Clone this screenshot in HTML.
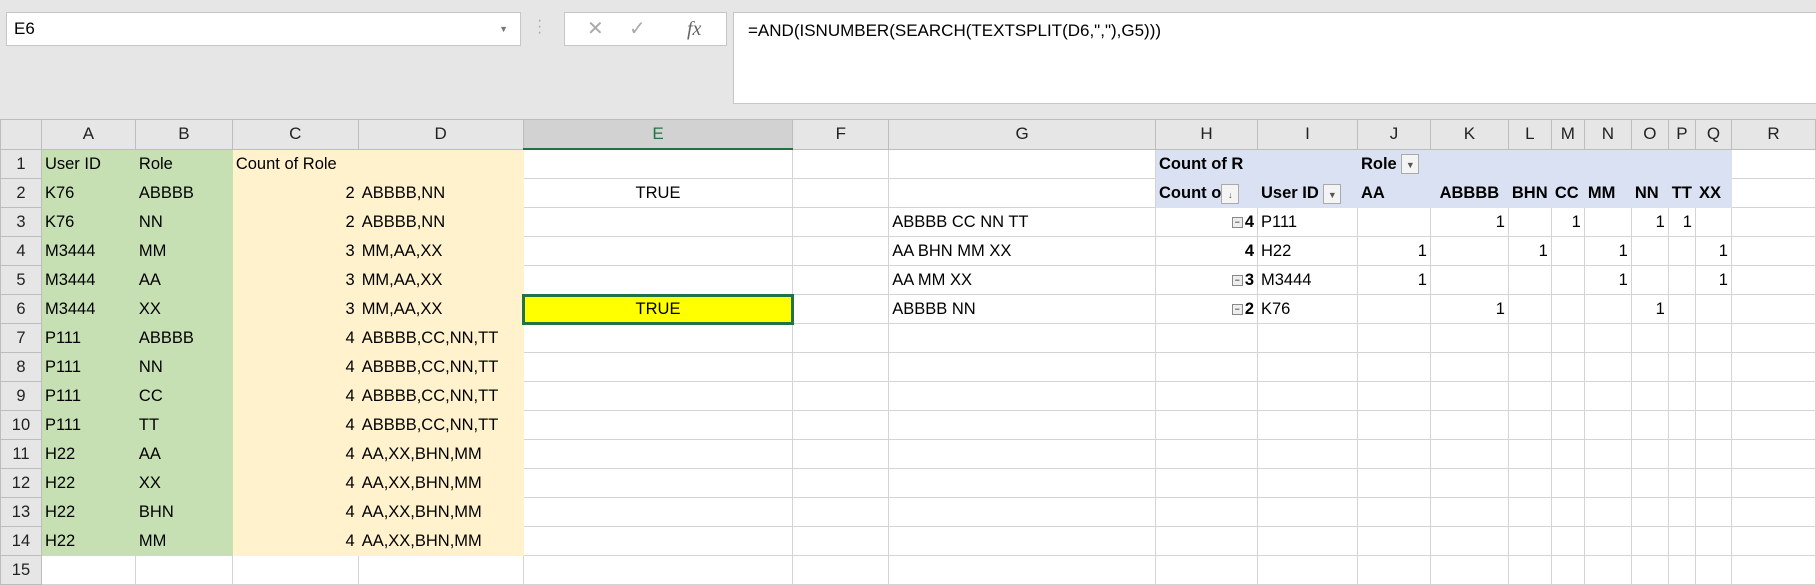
<!DOCTYPE html>
<html><head><meta charset="utf-8"><style>
body{margin:0;width:1816px;height:575px;overflow:hidden;background:#e6e6e6;font-family:"Liberation Sans",Arial,sans-serif;position:relative}
.box{position:absolute;background:#fff;border:1px solid #c6c6c6;box-sizing:border-box}
table{position:absolute;left:0;top:119px;border-collapse:collapse;table-layout:fixed;background:#fff}
td{height:28px;border:1px solid #d4d4d4;font-size:16.5px;padding:0 3px;white-space:nowrap;overflow:hidden;line-height:28px;color:#000}
tr.h td{background:#e6e6e6;text-align:center;font-size:17px;border-color:#bdbdbd;color:#222}
td.rh{background:#e6e6e6;text-align:center;border-color:#bdbdbd;padding:0;color:#222}
.g{background:#c6e0b4;border-color:#c6e0b4}
.y{background:#fff2cc;border-color:#fff2cc}
.p{background:#d9e1f2;border-color:#d9e1f2;font-weight:bold}
.r{text-align:right}.c{text-align:center}.b{font-weight:bold}
.sel{background:#ffff00;outline:3px solid #217346;outline-offset:-2px;text-align:center}
.dd{display:inline-block;width:18px;height:20px;border:1px solid #aaa;background:#f4f4f4;vertical-align:middle;font-size:9px;line-height:20px;text-align:center;color:#555;font-weight:normal;box-sizing:border-box}
.mn{display:inline-block;width:11px;height:11px;border:1px solid #888;font-size:9px;line-height:9px;text-align:center;vertical-align:middle;margin-right:2px;background:#eee;font-weight:normal;box-sizing:border-box}
</style></head><body>
<div class="box" style="left:6px;top:12px;width:515px;height:34px;font-size:17px;line-height:32px;padding-left:7px">E6<span style="position:absolute;right:12px;font-size:9px;color:#777">▼</span></div>
<div style="position:absolute;left:537px;top:18px;color:#aaa;font-size:16px;line-height:6px">·<br>·<br>·</div>
<div class="box" style="left:564px;top:12px;width:163px;height:34px;color:#aaa;font-size:20px;line-height:32px">
<span style="position:absolute;left:22px">✕</span><span style="position:absolute;left:64px">✓</span><span style="position:absolute;left:122px;font-family:'Liberation Serif',serif;font-style:italic;color:#666">fx</span></div>
<div class="box" style="left:733px;top:12px;width:1090px;height:92px;font-size:17px;padding:8px 0 0 14px">=AND(ISNUMBER(SEARCH(TEXTSPLIT(D6,","),G5)))</div>
<table>
<colgroup><col style="width:41px"><col style="width:94px"><col style="width:97px"><col style="width:126px"><col style="width:165px"><col style="width:270px"><col style="width:96px"><col style="width:267px"><col style="width:102px"><col style="width:100px"><col style="width:73px"><col style="width:78px"><col style="width:43px"><col style="width:33px"><col style="width:47px"><col style="width:37px"><col style="width:27px"><col style="width:36px"><col style="width:84px"></colgroup>
<tr class="h"><td style="background:#e6e6e6"></td><td>A</td><td>B</td><td>C</td><td>D</td><td style="background:#d2d2d2;border-bottom:2px solid #217346;color:#217346">E</td><td>F</td><td>G</td><td>H</td><td>I</td><td>J</td><td>K</td><td>L</td><td>M</td><td>N</td><td>O</td><td>P</td><td>Q</td><td>R</td></tr>
<tr><td class="rh">1</td><td class="g">User ID</td><td class="g">Role</td><td class="y" colspan="2">Count of Role</td><td></td><td></td><td></td><td class="p">Count of R</td><td class="p"></td><td class="p" colspan="2">Role <span class="dd">▼</span></td><td class="p"></td><td class="p"></td><td class="p"></td><td class="p"></td><td class="p"></td><td class="p"></td><td></td></tr>
<tr><td class="rh">2</td><td class="g">K76</td><td class="g">ABBBB</td><td class="y r">2</td><td class="y">ABBBB,NN</td><td class="c">TRUE</td><td></td><td></td><td class="p">Count o<span class="dd">↓</span></td><td class="p">User ID <span class="dd">▼</span></td><td class="p">AA</td><td class="p c">ABBBB</td><td class="p">BHN</td><td class="p">CC</td><td class="p">MM</td><td class="p">NN</td><td class="p">TT</td><td class="p">XX</td><td></td></tr>
<tr><td class="rh">3</td><td class="g">K76</td><td class="g">NN</td><td class="y r">2</td><td class="y">ABBBB,NN</td><td></td><td></td><td>ABBBB CC NN TT</td><td class="r b"><span class="mn">−</span>4</td><td>P111</td><td></td><td class="r">1</td><td></td><td class="r">1</td><td></td><td class="r">1</td><td class="r">1</td><td></td><td></td></tr>
<tr><td class="rh">4</td><td class="g">M3444</td><td class="g">MM</td><td class="y r">3</td><td class="y">MM,AA,XX</td><td></td><td></td><td>AA BHN MM XX</td><td class="r b">4</td><td>H22</td><td class="r">1</td><td></td><td class="r">1</td><td></td><td class="r">1</td><td></td><td></td><td class="r">1</td><td></td></tr>
<tr><td class="rh">5</td><td class="g">M3444</td><td class="g">AA</td><td class="y r">3</td><td class="y">MM,AA,XX</td><td></td><td></td><td>AA MM XX</td><td class="r b"><span class="mn">−</span>3</td><td>M3444</td><td class="r">1</td><td></td><td></td><td></td><td class="r">1</td><td></td><td></td><td class="r">1</td><td></td></tr>
<tr><td class="rh">6</td><td class="g">M3444</td><td class="g">XX</td><td class="y r">3</td><td class="y">MM,AA,XX</td><td class="sel">TRUE</td><td></td><td>ABBBB NN</td><td class="r b"><span class="mn">−</span>2</td><td>K76</td><td></td><td class="r">1</td><td></td><td></td><td></td><td class="r">1</td><td></td><td></td><td></td></tr>
<tr><td class="rh">7</td><td class="g">P111</td><td class="g">ABBBB</td><td class="y r">4</td><td class="y">ABBBB,CC,NN,TT</td><td></td><td></td><td></td><td></td><td></td><td></td><td></td><td></td><td></td><td></td><td></td><td></td><td></td><td></td></tr>
<tr><td class="rh">8</td><td class="g">P111</td><td class="g">NN</td><td class="y r">4</td><td class="y">ABBBB,CC,NN,TT</td><td></td><td></td><td></td><td></td><td></td><td></td><td></td><td></td><td></td><td></td><td></td><td></td><td></td><td></td></tr>
<tr><td class="rh">9</td><td class="g">P111</td><td class="g">CC</td><td class="y r">4</td><td class="y">ABBBB,CC,NN,TT</td><td></td><td></td><td></td><td></td><td></td><td></td><td></td><td></td><td></td><td></td><td></td><td></td><td></td><td></td></tr>
<tr><td class="rh">10</td><td class="g">P111</td><td class="g">TT</td><td class="y r">4</td><td class="y">ABBBB,CC,NN,TT</td><td></td><td></td><td></td><td></td><td></td><td></td><td></td><td></td><td></td><td></td><td></td><td></td><td></td><td></td></tr>
<tr><td class="rh">11</td><td class="g">H22</td><td class="g">AA</td><td class="y r">4</td><td class="y">AA,XX,BHN,MM</td><td></td><td></td><td></td><td></td><td></td><td></td><td></td><td></td><td></td><td></td><td></td><td></td><td></td><td></td></tr>
<tr><td class="rh">12</td><td class="g">H22</td><td class="g">XX</td><td class="y r">4</td><td class="y">AA,XX,BHN,MM</td><td></td><td></td><td></td><td></td><td></td><td></td><td></td><td></td><td></td><td></td><td></td><td></td><td></td><td></td></tr>
<tr><td class="rh">13</td><td class="g">H22</td><td class="g">BHN</td><td class="y r">4</td><td class="y">AA,XX,BHN,MM</td><td></td><td></td><td></td><td></td><td></td><td></td><td></td><td></td><td></td><td></td><td></td><td></td><td></td><td></td></tr>
<tr><td class="rh">14</td><td class="g">H22</td><td class="g">MM</td><td class="y r">4</td><td class="y">AA,XX,BHN,MM</td><td></td><td></td><td></td><td></td><td></td><td></td><td></td><td></td><td></td><td></td><td></td><td></td><td></td><td></td></tr>
<tr><td class="rh">15</td><td></td><td></td><td></td><td></td><td></td><td></td><td></td><td></td><td></td><td></td><td></td><td></td><td></td><td></td><td></td><td></td><td></td><td></td></tr>
</table>
</body></html>
